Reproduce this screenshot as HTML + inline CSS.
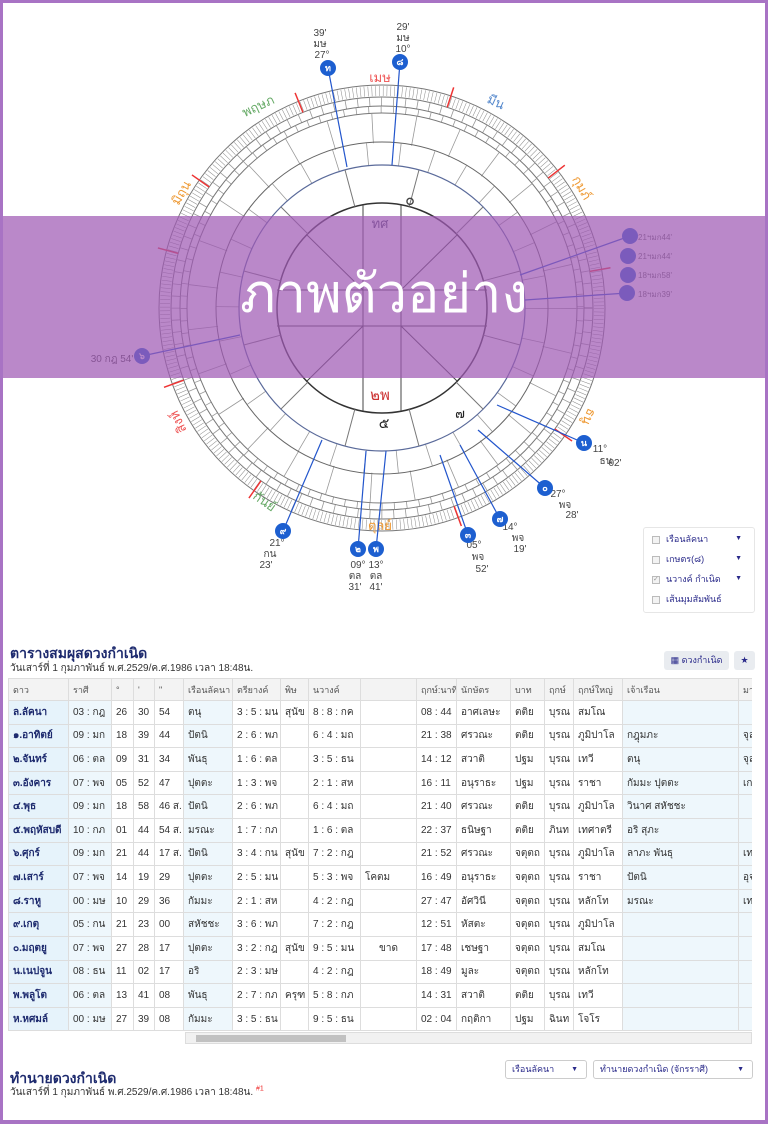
<!DOCTYPE html>
<html><head><meta charset="utf-8">
<style>
*{box-sizing:border-box;margin:0;padding:0}
html,body{width:768px;height:1124px;overflow:hidden;background:#fff;font-family:"Liberation Sans",sans-serif;color:#333}
.frame{position:absolute;left:0;top:0;width:768px;height:1124px;border:3px solid #a873c4;border-bottom-width:4px}
.banner{position:absolute;left:0;top:216px;width:768px;height:162px;background:rgba(160,90,180,0.72);color:#fff;font-size:54px;text-align:center;line-height:156px;letter-spacing:0px;padding-left:0px}
.legend{position:absolute;left:643px;top:527px;width:112px;height:86px;border:1px solid #e6e6e6;border-radius:3px;font-size:9px;color:#2a2a8a;background:#fff}
.legend div{height:20px;line-height:20px;padding-left:8px;position:relative}
.legend span.cb{display:inline-block;width:8px;height:8px;border:1px solid #bbb;background:#f3f3f3;vertical-align:middle;margin-right:6px}
.legend b{position:absolute;right:12px;font-size:7px;color:#2a2a8a}
h2{position:absolute;font-size:14px;color:#1d2a6e;font-weight:bold}
.sub{position:absolute;font-size:10px;color:#333}
.btn{position:absolute;background:#e9ecf0;border-radius:3px;font-size:9px;color:#2a2a8a;text-align:center;line-height:19px}
.tw{position:absolute;left:8px;top:678px;width:744px;height:366px;overflow:hidden}
table{border-collapse:collapse;font-size:10px;table-layout:fixed;width:800px}
td,th{border:1px solid #ddd;height:23.6px;padding:0 4px;white-space:nowrap;overflow:hidden;font-weight:normal;text-align:left}
th{background:#f3f3f3;color:#555;font-size:9px;height:22px}
td.n{background:#e6f3fb;color:#1d2a6e;font-weight:bold}
td.b{background:#eef7fc}
.sb{position:absolute;left:185px;top:1032px;width:567px;height:12px;background:#f1f1f1;border:1px solid #ddd}
.sb i{position:absolute;left:10px;top:2px;width:150px;height:7px;background:#c1c1c1}
.sel{position:absolute;top:1060px;height:19px;border:1px solid #ccc;border-radius:3px;font-size:9px;color:#2a2a8a;line-height:17px;padding-left:6px}
.sel b{position:absolute;right:8px;font-size:7px}
</style></head><body>
<svg width="768" height="640" style="position:absolute;left:0;top:0" font-family="Liberation Sans, sans-serif">
<g transform="translate(382,308)" fill="none">
<circle r="223" stroke="#777" stroke-width="1"/>
<circle r="217" stroke="#888" stroke-width="10" stroke-dasharray="0.5 3.29"/>
<circle r="211" stroke="#777"/>
<circle r="206.5" stroke="#999" stroke-width="9" stroke-dasharray="0.8 11.2"/>
<circle r="202" stroke="#777"/>
<circle r="198.5" stroke="#999" stroke-width="7" stroke-dasharray="0.8 11.65"/>
<circle r="195" stroke="#777"/>
<circle r="180" stroke="#999" stroke-width="30" stroke-dasharray="0.8 41.1"/>
<circle r="166" stroke="#666"/>
<circle r="154" stroke="#999" stroke-width="23" stroke-dasharray="0.8 31.5"/>
<circle r="143" stroke="#5a6a9a" stroke-width="1.2"/>
<circle r="105" stroke="#333" stroke-width="1.5"/>
<g stroke="#777">
<line x1="0" y1="-105" x2="0" y2="-143" transform="rotate(15)"/><line x1="0" y1="-105" x2="0" y2="-143" transform="rotate(45)"/><line x1="0" y1="-105" x2="0" y2="-143" transform="rotate(75)"/><line x1="0" y1="-105" x2="0" y2="-143" transform="rotate(105)"/><line x1="0" y1="-105" x2="0" y2="-143" transform="rotate(135)"/><line x1="0" y1="-105" x2="0" y2="-143" transform="rotate(165)"/><line x1="0" y1="-105" x2="0" y2="-143" transform="rotate(195)"/><line x1="0" y1="-105" x2="0" y2="-143" transform="rotate(225)"/><line x1="0" y1="-105" x2="0" y2="-143" transform="rotate(255)"/><line x1="0" y1="-105" x2="0" y2="-143" transform="rotate(285)"/><line x1="0" y1="-105" x2="0" y2="-143" transform="rotate(315)"/><line x1="0" y1="-105" x2="0" y2="-143" transform="rotate(345)"/>
</g>
<g stroke="#e33" stroke-width="1.5">
<line x1="0" y1="-211" x2="0" y2="-232" transform="rotate(-22)"/><line x1="0" y1="-211" x2="0" y2="-232" transform="rotate(18)"/><line x1="0" y1="-211" x2="0" y2="-232" transform="rotate(52)"/><line x1="0" y1="-211" x2="0" y2="-232" transform="rotate(-55)"/><line x1="0" y1="-211" x2="0" y2="-232" transform="rotate(-110)"/><line x1="0" y1="-211" x2="0" y2="-232" transform="rotate(-145)"/><line x1="0" y1="-211" x2="0" y2="-232" transform="rotate(160)"/><line x1="0" y1="-211" x2="0" y2="-232" transform="rotate(125)"/><line x1="0" y1="-211" x2="0" y2="-232" transform="rotate(-75)"/><line x1="0" y1="-211" x2="0" y2="-232" transform="rotate(80)"/>
</g>
<g stroke="#444">
<line x1="-19" y1="-103" x2="-19" y2="103"/><line x1="19" y1="-103" x2="19" y2="103"/>
<line x1="-105" y1="18" x2="105" y2="18"/><line x1="-105" y1="-18" x2="105" y2="-18"/>
<line x1="-19" y1="-18" x2="-75" y2="-73"/><line x1="19" y1="-18" x2="75" y2="-73"/>
<line x1="-19" y1="18" x2="-75" y2="73"/><line x1="19" y1="18" x2="75" y2="73"/>
</g>
</g>
<g font-size="13" text-anchor="middle">
<text x="380" y="82" fill="#e55">เมษ</text>
<text x="260" y="110" fill="#6a6" transform="rotate(-25 260 110)">พฤษภ</text>
<text x="494" y="106" fill="#58c" transform="rotate(25 494 106)">มีน</text>
<text x="185" y="195" fill="#e93" transform="rotate(-60 185 195)">มิถุน</text>
<text x="578" y="190" fill="#e93" transform="rotate(60 578 190)">กุมภ์</text>
<text x="182" y="420" fill="#e55" transform="rotate(-115 182 420)">สิงห์</text>
<text x="585" y="415" fill="#e93" transform="rotate(115 585 415)">ธนู</text>
<text x="262" y="505" fill="#6a6" transform="rotate(35 262 505)">กันย์</text>
<text x="380" y="530" fill="#e93">ตุลย์</text>
</g>
<g font-size="10" fill="#444" text-anchor="middle">
<text x="320" y="36">39'</text><text x="320" y="47">มษ</text><text x="322" y="58">27°</text>
<text x="403" y="30">29'</text><text x="403" y="41">มษ</text><text x="403" y="52">10°</text>
<text x="600" y="452">11°</text><text x="606" y="464">ธน</text><text x="615" y="466">02'</text>
<text x="558" y="497">27°</text><text x="565" y="508">พจ</text><text x="572" y="518">28'</text>
<text x="510" y="530">14°</text><text x="518" y="541">พจ</text><text x="520" y="552">19'</text>
<text x="474" y="548">05°</text><text x="478" y="560">พจ</text><text x="482" y="572">52'</text>
<text x="358" y="568">09°</text><text x="355" y="579">ตล</text><text x="355" y="590">31'</text>
<text x="376" y="568">13°</text><text x="376" y="579">ตล</text><text x="376" y="590">41'</text>
<text x="277" y="546">21°</text><text x="270" y="557">กน</text><text x="266" y="568">23'</text>
<text x="112" y="362">30 กฎ 54'</text>
<text x="410" y="205" font-size="16">๐</text>
<text x="380" y="228" font-size="13" fill="#446">ทศ</text>
<text x="380" y="400" font-size="15" fill="#c33">๒พ</text>
<text x="384" y="428" font-size="14" fill="#222">๕</text>
<text x="460" y="418" font-size="13" fill="#222">๗</text>
<text x="655" y="240" font-size="8" fill="#666">21ฯมก44'</text>
<text x="655" y="259" font-size="8" fill="#666">21ฯมก44'</text>
<text x="655" y="278" font-size="8" fill="#666">18ฯมก58'</text>
<text x="655" y="297" font-size="8" fill="#666">18ฯมก39'</text>
</g>
<g stroke="#2255cc" stroke-width="1.2">
<line x1="328" y1="68" x2="347" y2="167"/><line x1="400" y1="62" x2="392" y2="165"/>
<line x1="584" y1="443" x2="497" y2="405"/><line x1="545" y1="488" x2="478" y2="430"/>
<line x1="500" y1="519" x2="460" y2="445"/><line x1="468" y1="535" x2="440" y2="455"/>
<line x1="376" y1="549" x2="386" y2="451"/><line x1="358" y1="549" x2="366" y2="451"/>
<line x1="283" y1="531" x2="322" y2="440"/><line x1="142" y1="356" x2="240" y2="335"/>
<line x1="630" y1="236" x2="520" y2="275"/><line x1="627" y1="293" x2="525" y2="300"/>
</g>
<g fill="#1d5fd0">
<circle cx="328" cy="68" r="8"/><circle cx="400" cy="62" r="8"/><circle cx="584" cy="443" r="8"/><circle cx="545" cy="488" r="8"/><circle cx="500" cy="519" r="8"/><circle cx="468" cy="535" r="8"/><circle cx="376" cy="549" r="8"/><circle cx="358" cy="549" r="8"/><circle cx="283" cy="531" r="8"/><circle cx="142" cy="356" r="8"/>
<circle cx="630" cy="236" r="8"/><circle cx="628" cy="256" r="8"/><circle cx="628" cy="275" r="8"/><circle cx="627" cy="293" r="8"/>
</g>
<g fill="#fff" font-size="9" font-weight="bold" text-anchor="middle">
<text x="328" y="71">ท</text><text x="400" y="65">๘</text><text x="584" y="446">น</text><text x="545" y="491">๐</text><text x="500" y="522">๗</text><text x="468" y="538">๓</text><text x="376" y="552">พ</text><text x="358" y="552">๒</text><text x="283" y="534">๙</text><text x="142" y="359">๖</text>
</g>
</svg>
<div class="banner">ภาพตัวอย่าง</div>
<div class="legend">
<div style="margin-top:1px"><span class="cb"></span>เรือนลัคนา<b>▼</b></div>
<div><span class="cb"></span>เกษตร(๘)<b>▼</b></div>
<div><span class="cb" style="color:#999;font-size:7px;line-height:6px">✓</span>นวางค์ กำเนิด<b>▼</b></div>
<div><span class="cb"></span>เส้นมุมสัมพันธ์</div>
</div>
<h2 style="left:10px;top:643px">ตารางสมผุสดวงกำเนิด</h2>
<div class="sub" style="left:10px;top:661px">วันเสาร์ที่ 1 กุมภาพันธ์ พ.ศ.2529/ค.ศ.1986 เวลา 18:48น.</div>
<div class="btn" style="left:664px;top:651px;width:65px">▦ ดวงกำเนิด</div>
<div class="btn" style="left:734px;top:651px;width:21px">★</div>
<div class="tw"><table>
<colgroup><col style="width:60px"><col style="width:43px"><col style="width:22px"><col style="width:21px"><col style="width:29px"><col style="width:49px"><col style="width:48px"><col style="width:28px"><col style="width:52px"><col style="width:56px"><col style="width:40px"><col style="width:54px"><col style="width:34px"><col style="width:29px"><col style="width:49px"><col style="width:116px"><col style="width:70px"></colgroup>
<tr><th>ดาว</th><th>ราศี</th><th>°</th><th>'</th><th>"</th><th>เรือนลัคนา</th><th>ตรียางค์</th><th>พิษ</th><th>นวางค์</th><th></th><th>ฤกษ์:นาที</th><th>นักษัตร</th><th>บาท</th><th>ฤกษ์</th><th>ฤกษ์ใหญ่</th><th>เจ้าเรือน</th><th>มาตรฐาน</th></tr>
<tr><td class="n">ล.ลัคนา</td><td class="b">03 : กฎ</td><td>26</td><td>30</td><td>54</td><td class="b">ตนุ</td><td>3 : 5 : มน</td><td>สุนัข</td><td>8 : 8 : กค</td><td></td><td>08 : 44</td><td>อาศเลษะ</td><td>ตติย</td><td>บุรณ</td><td>สมโณ</td><td class="b"></td><td class="b"></td></tr>
<tr><td class="n">๑.อาทิตย์</td><td class="b">09 : มก</td><td>18</td><td>39</td><td>44</td><td class="b">ปัตนิ</td><td>2 : 6 : พภ</td><td></td><td>6 : 4 : มถ</td><td></td><td>21 : 38</td><td>ศรวณะ</td><td>ตติย</td><td>บุรณ</td><td>ภูมิปาโล</td><td class="b">กฎุมภะ</td><td class="b">จุลจักร</td></tr>
<tr><td class="n">๒.จันทร์</td><td class="b">06 : ตล</td><td>09</td><td>31</td><td>34</td><td class="b">พันธุ</td><td>1 : 6 : ตล</td><td></td><td>3 : 5 : ธน</td><td></td><td>14 : 12</td><td>สวาติ</td><td>ปฐม</td><td>บุรณ</td><td>เทวี</td><td class="b">ตนุ</td><td class="b">จุลจักร</td></tr>
<tr><td class="n">๓.อังคาร</td><td class="b">07 : พจ</td><td>05</td><td>52</td><td>47</td><td class="b">ปุตตะ</td><td>1 : 3 : พจ</td><td></td><td>2 : 1 : สห</td><td></td><td>16 : 11</td><td>อนุราธะ</td><td>ปฐม</td><td>บุรณ</td><td>ราชา</td><td class="b">กัมมะ ปุตตะ</td><td class="b">เกษตร</td></tr>
<tr><td class="n">๔.พุธ</td><td class="b">09 : มก</td><td>18</td><td>58</td><td>46 ส.</td><td class="b">ปัตนิ</td><td>2 : 6 : พภ</td><td></td><td>6 : 4 : มถ</td><td></td><td>21 : 40</td><td>ศรวณะ</td><td>ตติย</td><td>บุรณ</td><td>ภูมิปาโล</td><td class="b">วินาศ สหัชชะ</td><td class="b"></td></tr>
<tr><td class="n">๕.พฤหัสบดี</td><td class="b">10 : กภ</td><td>01</td><td>44</td><td>54 ส.</td><td class="b">มรณะ</td><td>1 : 7 : กภ</td><td></td><td>1 : 6 : ตล</td><td></td><td>22 : 37</td><td>ธนิษฐา</td><td>ตติย</td><td>ภินท</td><td>เทศาตรี</td><td class="b">อริ สุภะ</td><td class="b"></td></tr>
<tr><td class="n">๖.ศุกร์</td><td class="b">09 : มก</td><td>21</td><td>44</td><td>17 ส.</td><td class="b">ปัตนิ</td><td>3 : 4 : กน</td><td>สุนัข</td><td>7 : 2 : กฎ</td><td></td><td>21 : 52</td><td>ศรวณะ</td><td>จตุตถ</td><td>บุรณ</td><td>ภูมิปาโล</td><td class="b">ลาภะ พันธุ</td><td class="b">เทวี</td></tr>
<tr><td class="n">๗.เสาร์</td><td class="b">07 : พจ</td><td>14</td><td>19</td><td>29</td><td class="b">ปุตตะ</td><td>2 : 5 : มน</td><td></td><td>5 : 3 : พจ</td><td>โคตม</td><td>16 : 49</td><td>อนุราธะ</td><td>จตุตถ</td><td>บุรณ</td><td>ราชา</td><td class="b">ปัตนิ</td><td class="b">อุจจ</td></tr>
<tr><td class="n">๘.ราหู</td><td class="b">00 : มษ</td><td>10</td><td>29</td><td>36</td><td class="b">กัมมะ</td><td>2 : 1 : สห</td><td></td><td>4 : 2 : กฎ</td><td></td><td>27 : 47</td><td>อัศวินี</td><td>จตุตถ</td><td>บุรณ</td><td>หลักโท</td><td class="b">มรณะ</td><td class="b">เทวี</td></tr>
<tr><td class="n">๙.เกตุ</td><td class="b">05 : กน</td><td>21</td><td>23</td><td>00</td><td class="b">สหัชชะ</td><td>3 : 6 : พภ</td><td></td><td>7 : 2 : กฎ</td><td></td><td>12 : 51</td><td>หัสตะ</td><td>จตุตถ</td><td>บุรณ</td><td>ภูมิปาโล</td><td class="b"></td><td class="b"></td></tr>
<tr><td class="n">๐.มฤตยู</td><td class="b">07 : พจ</td><td>27</td><td>28</td><td>17</td><td class="b">ปุตตะ</td><td>3 : 2 : กฎ</td><td>สุนัข</td><td>9 : 5 : มน</td><td style="text-align:center">ขาด</td><td>17 : 48</td><td>เชษฐา</td><td>จตุตถ</td><td>บุรณ</td><td>สมโณ</td><td class="b"></td><td class="b"></td></tr>
<tr><td class="n">น.เนปจูน</td><td class="b">08 : ธน</td><td>11</td><td>02</td><td>17</td><td class="b">อริ</td><td>2 : 3 : มษ</td><td></td><td>4 : 2 : กฎ</td><td></td><td>18 : 49</td><td>มูละ</td><td>จตุตถ</td><td>บุรณ</td><td>หลักโท</td><td class="b"></td><td class="b"></td></tr>
<tr><td class="n">พ.พลูโต</td><td class="b">06 : ตล</td><td>13</td><td>41</td><td>08</td><td class="b">พันธุ</td><td>2 : 7 : กภ</td><td>ครุฑ</td><td>5 : 8 : กภ</td><td></td><td>14 : 31</td><td>สวาติ</td><td>ตติย</td><td>บุรณ</td><td>เทวี</td><td class="b"></td><td class="b"></td></tr>
<tr><td class="n">ห.หศมล์</td><td class="b">00 : มษ</td><td>27</td><td>39</td><td>08</td><td class="b">กัมมะ</td><td>3 : 5 : ธน</td><td></td><td>9 : 5 : ธน</td><td></td><td>02 : 04</td><td>กฤติกา</td><td>ปฐม</td><td>ฉินท</td><td>โจโร</td><td class="b"></td><td class="b"></td></tr>
</table></div>
<div class="sb"><i></i></div>
<div class="sel" style="left:505px;width:82px">เรือนลัคนา<b>▼</b></div>
<div class="sel" style="left:593px;width:160px">ทำนายดวงกำเนิด (จักรราศี)<b>▼</b></div>
<h2 style="left:10px;top:1068px">ทำนายดวงกำเนิด</h2>
<div class="sub" style="left:10px;top:1085px">วันเสาร์ที่ 1 กุมภาพันธ์ พ.ศ.2529/ค.ศ.1986 เวลา 18:48น. <sup style="color:#e22;font-size:7px">#1</sup></div>
<div class="frame"></div>
</body></html>
